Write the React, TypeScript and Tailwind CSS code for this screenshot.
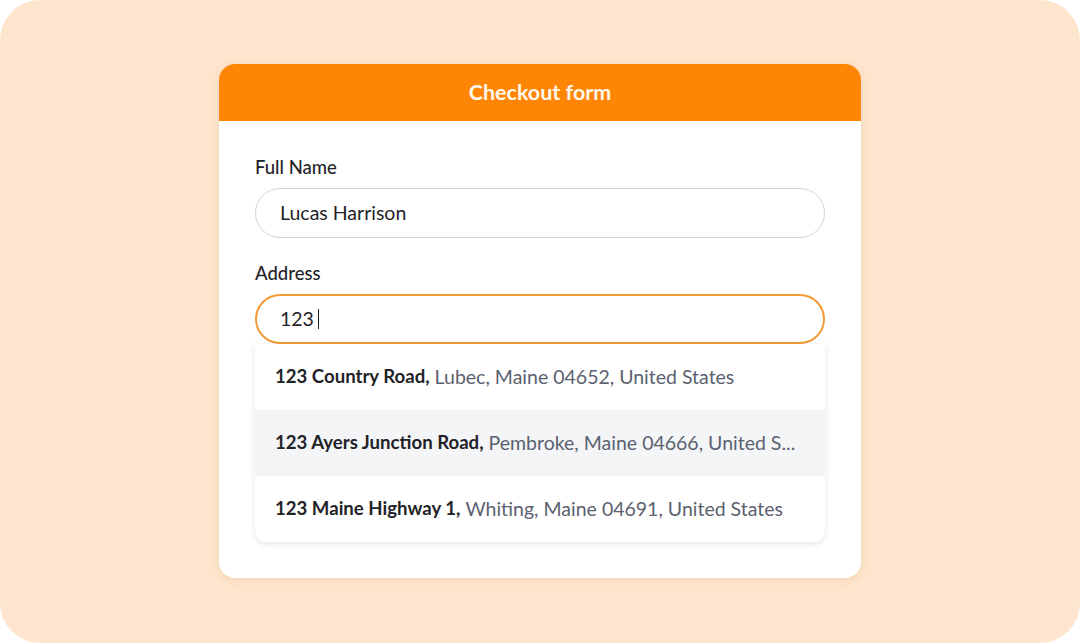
import React from 'react';

type Suggestion = {
  street: string;
  rest: string;
};

const suggestions: Suggestion[] = [
  { street: '123 Country Road,', rest: 'Lubec, Maine 04652, United States' },
  { street: '123 Ayers Junction Road,', rest: 'Pembroke, Maine 04666, United S...' },
  { street: '123 Maine Highway 1,', rest: 'Whiting, Maine 04691, United States' },
];

const App: React.FC = () => {
  return (
    <div className="h-[643px] w-[1080px] bg-white">
      <div
        className="flex h-full w-full justify-center rounded-[40px] bg-[#fde6cd] pt-16"
        style={{ fontFamily: 'Lato, "Noto Sans", sans-serif' }}
      >
        <div className="h-[514px] w-[642px] rounded-2xl bg-white shadow-[0_2px_8px_rgba(180,120,60,0.15)]">
          <div className="flex h-[57px] items-center justify-center rounded-t-2xl bg-[#ff8605]">
            <h2 className="text-[21.5px] font-bold text-[#fff8ec]">Checkout form</h2>
          </div>

          <div className="px-9 pt-[36px]">
            <label className="block text-[18.5px] font-medium leading-5 text-[#1f2328]">Full Name</label>
            <div className="mt-[11px] flex h-[50px] items-center rounded-full border border-[#d4d4d8] px-6 text-[19.5px] text-[#1f2328]">
              Lucas Harrison
            </div>

            <label className="mt-[25px] block text-[18.5px] font-medium leading-5 text-[#1f2328]">Address</label>
            <div className="mt-[11px] flex h-[50px] items-center rounded-full border-2 border-[#f29a33] px-[23px] text-[19.5px] text-[#1f2328]">
              123 <span className="ml-1 inline-block h-[20px] w-[1.5px] bg-[#1f2328]" />
            </div>

            <ul className="overflow-hidden rounded-b-xl bg-white shadow-[0_2px_6px_rgba(30,41,59,0.12)]">
              {suggestions.map((s, i) => (
                <li
                  key={s.street}
                  className={`flex h-[66px] items-center whitespace-nowrap px-5 text-[19.5px] ${i === 1 ? 'bg-[#f4f5f7]' : 'bg-white'}`}
                >
                  <span className="text-[18.6px] font-bold text-[#1f2328]">{s.street}</span>
                  <span className="ml-[5px] text-[#5b6170]">{s.rest}</span>
                </li>
              ))}
            </ul>
          </div>
        </div>
      </div>
    </div>
  );
};

export default App;
